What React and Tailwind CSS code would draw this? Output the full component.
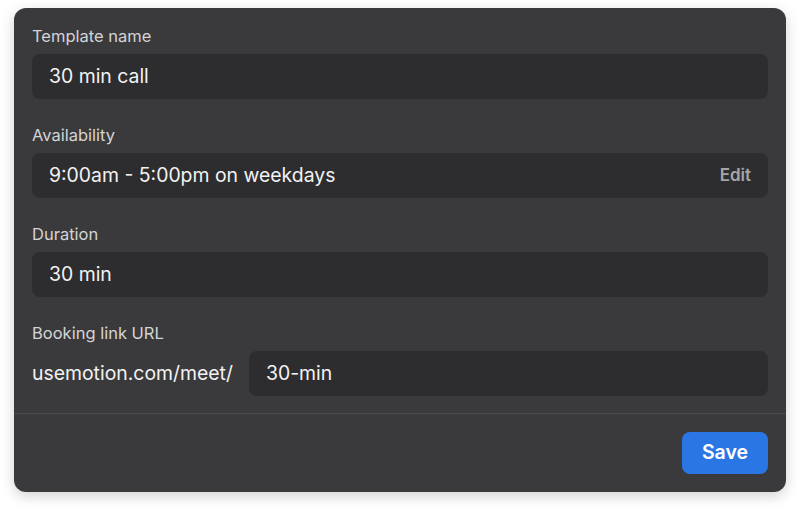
import React from "react";

const Field = ({ label, children }) => {
  return (
    <div className="flex flex-col">
      <label className="text-[16.5px] leading-5 text-[#d4d4d6]">{label}</label>
      <div className="mt-2">{children}</div>
    </div>
  );
};

const Input = ({ value, right, className = "" }) => {
  return (
    <div
      className={`flex h-[45px] items-center justify-between rounded-lg bg-[#2d2d2f] px-[17px] ${className}`}
    >
      <span className="text-[19.4px] text-[#f2f2f3]">{value}</span>
      {right}
    </div>
  );
};

const App = () => {
  return (
    <div
      className="min-h-[512px] w-[800px] bg-white pt-2 pl-[14px]"
      style={{ fontFamily: "Inter, 'Noto Sans', sans-serif" }}
    >
      <div className="w-[772px] overflow-hidden rounded-xl bg-[#3a3a3c] shadow-[0_4px_14px_rgba(0,0,0,0.18)]">
        <div className="flex flex-col gap-[26px] px-[18px] pt-[18px] pb-[17px]">
          <Field label="Template name">
            <Input value="30 min call" />
          </Field>
          <Field label="Availability">
            <Input
              value="9:00am - 5:00pm on weekdays"
              right={
                <span className="text-[17px] font-semibold text-[#a5a5a7]">
                  Edit
                </span>
              }
            />
          </Field>
          <Field label="Duration">
            <Input value="30 min" />
          </Field>
          <Field label="Booking link URL">
            <div className="flex items-center gap-4">
              <span className="text-[19.4px] text-[#f2f2f3]">
                usemotion.com/meet/
              </span>
              <Input value="30-min" className="flex-1" />
            </div>
          </Field>
        </div>
        <div className="flex justify-end border-t border-[#4a4a4d] px-[18px] py-[18px]">
          <button className="h-[42px] w-[86px] rounded-lg bg-[#2b76e5] text-[19.5px] font-semibold text-white">
            Save
          </button>
        </div>
      </div>
    </div>
  );
};

export default App;
